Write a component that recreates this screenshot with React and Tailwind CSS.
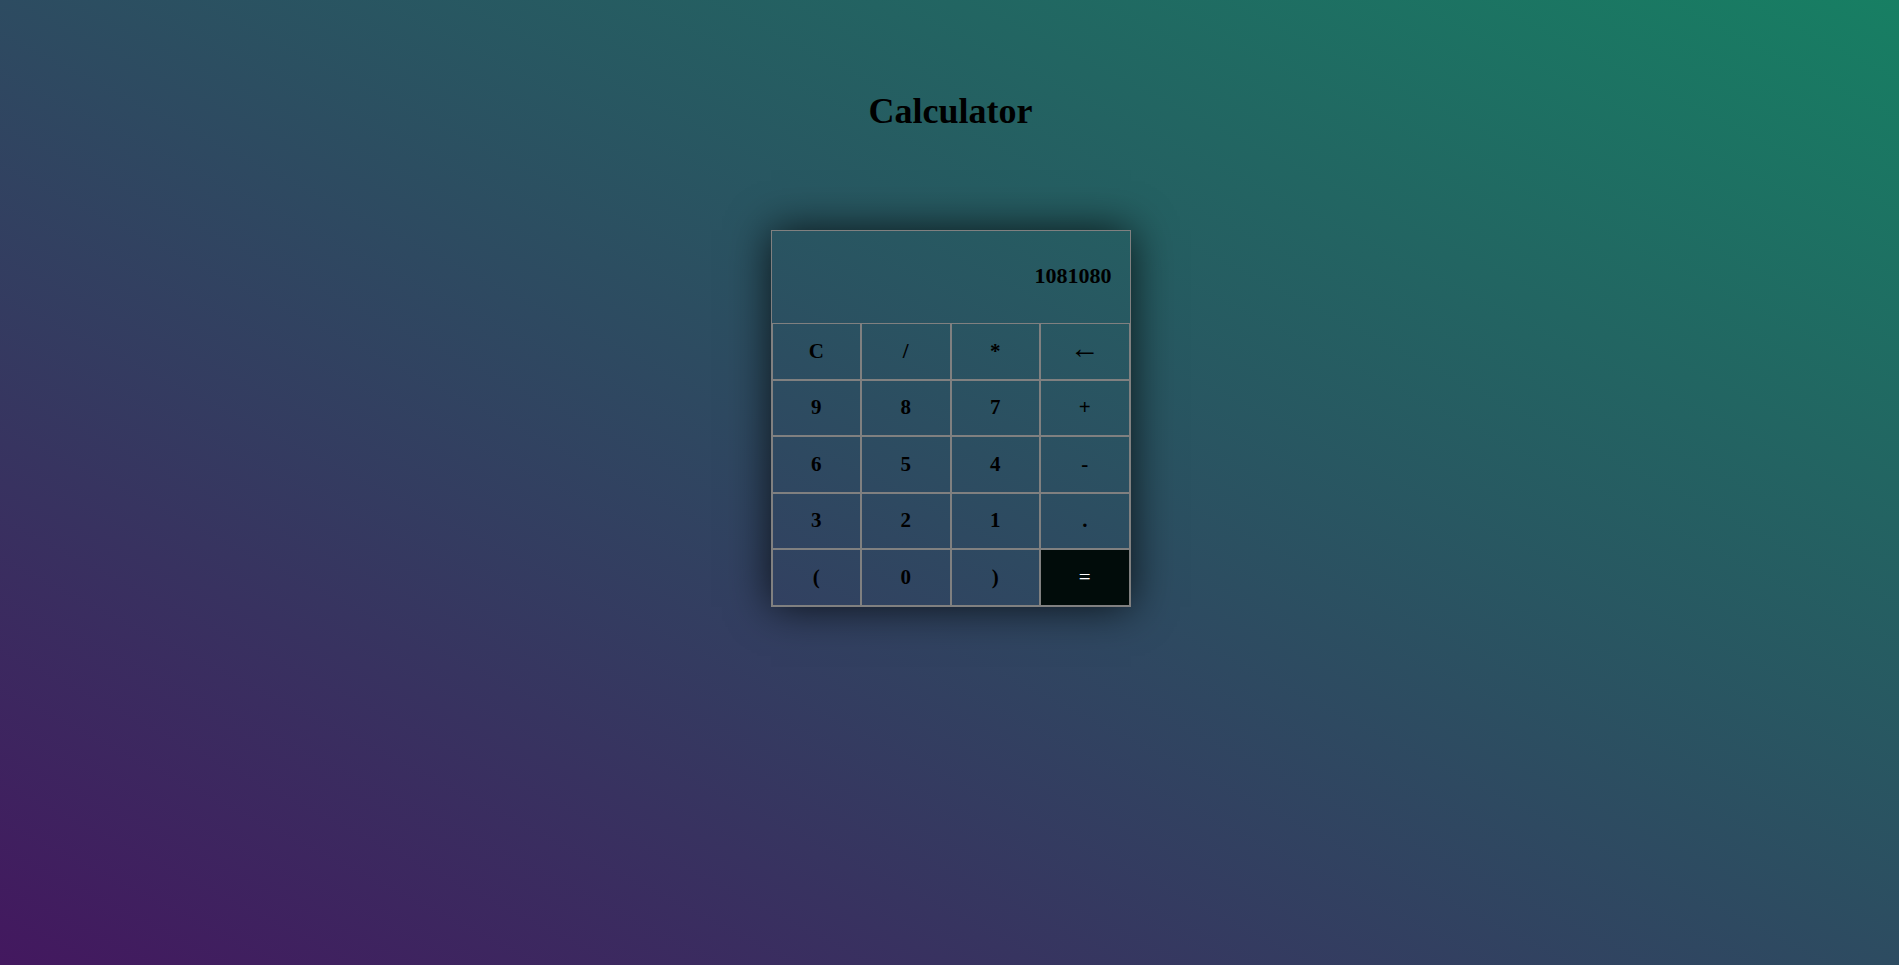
import React, { useState } from "react";

// Teclas de la calculadora, fila por fila
const KEYS = [
    "C", "/", "*", "←",
    "9", "8", "7", "+",
    "6", "5", "4", "-",
    "3", "2", "1", ".",
    "(", "0", ")", "=",
];

const CalcButton = ({ label, onPress }) => {
    const isEquals = label === "=";
    const isArrow = label === "←";
    let cls = "h-[56.5px] border border-[#808080] flex items-center justify-center ";
    if (isEquals) cls += "bg-[#010c0a] text-white text-[21px] font-normal";
    else if (isArrow) cls += "bg-transparent text-black text-[30px] font-normal leading-none pb-[7px]";
    else cls += "bg-transparent text-black text-[21px] font-bold";
    return (
        <button type="button" onClick={() => onPress(label)} className={cls}>
            {label}
        </button>
    );
};

const App = () => {
    const [value, setValue] = useState("1081080");

    // Manejo de teclas
    const handlePress = (key) => {
        if (key === "C") return setValue("");
        if (key === "←") return setValue((v) => v.slice(0, -1));
        if (key === "=") {
            try {
                // eslint-disable-next-line no-new-func
                const result = Function(`"use strict"; return (${value || 0})`)();
                setValue(String(result));
            } catch {
                setValue("Error");
            }
            return;
        }
        setValue((v) => v + key);
    };

    return (
        <div
            className="min-h-screen w-full bg-[linear-gradient(to_top_right,#43185f,#177f63)] flex flex-col items-center pt-[91px]"
            style={{ fontFamily: '"Liberation Serif", "Times New Roman", serif' }}
        >
            <h1 className="ml-[2px] text-[36px] leading-[41px] font-bold text-black">Calculator</h1>

            <div className="mt-[98px] ml-[2px] w-[360px] border border-[#808080] shadow-[0_0_40px_rgba(0,0,0,0.75)]">
                {/* Pantalla */}
                <div className="h-[92px] flex items-center justify-end pr-[18px] pb-[3px] text-[22px] font-bold text-black">
                    {value}
                </div>

                {/* Teclado */}
                <div className="grid grid-cols-4">
                    {KEYS.map((k) => (
                        <CalcButton key={k} label={k} onPress={handlePress} />
                    ))}
                </div>
            </div>
        </div>
    );
};

export default App;
